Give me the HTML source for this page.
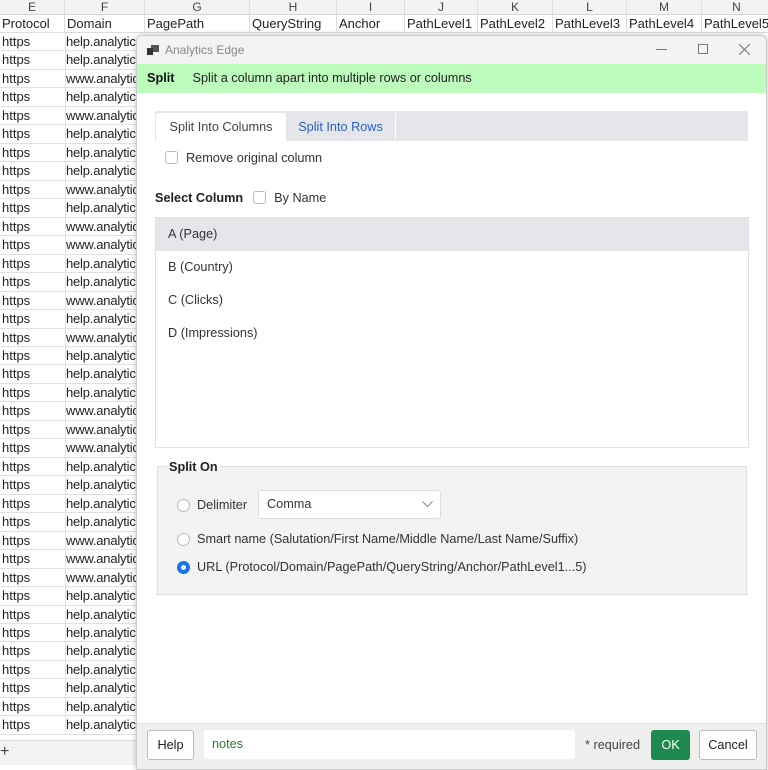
<!DOCTYPE html>
<html><head><meta charset="utf-8"><style>
*{box-sizing:border-box;margin:0;padding:0}
body{width:768px;height:765px;overflow:hidden;background:#fff;font-family:"Liberation Sans","DejaVu Sans",sans-serif;position:relative}
.hdr{position:absolute;top:0;left:0;width:768px;height:15px;background:#f3f3f3;border-bottom:1px solid #d4d4d4;font-size:12px;color:#444}
.hdr span{position:absolute;top:0;text-align:center;border-right:1px solid #ddd;height:15px;line-height:15px}
.names{position:absolute;top:15px;left:0;width:768px;height:18px;font-size:13px;color:#222}
.names span{position:absolute;top:0;height:18px;line-height:18px;padding-left:2px;border-right:1px solid #ddd;border-bottom:1px solid #ddd}
.rows{position:absolute;top:33px;left:0;width:140px}
.r{height:18.47px;border-bottom:1px solid #e1e1e1;font-size:13px;color:#222;position:relative;line-height:18px}
.r span{position:absolute;left:2px}
.r b{font-weight:normal;position:absolute;left:66px;white-space:nowrap;letter-spacing:-0.2px}
.r:before{content:"";position:absolute;left:65px;top:0;height:100%;border-left:1px solid #e1e1e1}
.bot{position:absolute;top:740px;left:0;width:140px;height:25px;background:#f3f3f3;border-top:1px solid #ddd;font-size:16px;color:#444;padding:2px 0 0 0}
.dlg{position:absolute;left:136px;top:35px;width:631px;height:735px;background:#fff;border:1px solid #ccc;border-radius:6px 6px 0 0;box-shadow:0 0 6px rgba(0,0,0,.25);overflow:hidden;font-size:12.7px;color:#333}
.title{height:28px;background:#f3f3f3;position:relative;font-size:12px;color:#888}
.ban{position:absolute;top:28px;left:0;width:100%;height:29px;background:#bdfbbc;line-height:29px;padding-left:10px;color:#222}
.a{position:absolute}
.cb{display:inline-block;width:13px;height:13px;border:1px solid #bbb;border-radius:3px;vertical-align:-2px;background:#fff}
.rad{position:absolute;width:13px;height:13px;border:1px solid #bbb;border-radius:50%;background:#fff}
</style></head><body>
<div class="hdr">
<span style="left:0;width:65px">E</span><span style="left:65px;width:80px">F</span><span style="left:145px;width:105px">G</span><span style="left:250px;width:87px">H</span><span style="left:337px;width:68px">I</span><span style="left:405px;width:73px">J</span><span style="left:478px;width:75px">K</span><span style="left:553px;width:74px">L</span><span style="left:627px;width:75px">M</span><span style="left:702px;width:70px">N</span>
</div>
<div class="names">
<span style="left:0;width:65px">Protocol</span><span style="left:65px;width:80px">Domain</span><span style="left:145px;width:105px">PagePath</span><span style="left:250px;width:87px">QueryString</span><span style="left:337px;width:68px">Anchor</span><span style="left:405px;width:73px">PathLevel1</span><span style="left:478px;width:75px">PathLevel2</span><span style="left:553px;width:74px">PathLevel3</span><span style="left:627px;width:75px">PathLevel4</span><span style="left:702px;width:70px;overflow:hidden;white-space:nowrap">PathLevel5</span>
</div>
<div class="rows">
<div class="r"><span>https</span><b>help.analytics</b></div>
<div class="r"><span>https</span><b>help.analytics</b></div>
<div class="r"><span>https</span><b>www.analytics</b></div>
<div class="r"><span>https</span><b>help.analytics</b></div>
<div class="r"><span>https</span><b>www.analytics</b></div>
<div class="r"><span>https</span><b>help.analytics</b></div>
<div class="r"><span>https</span><b>help.analytics</b></div>
<div class="r"><span>https</span><b>help.analytics</b></div>
<div class="r"><span>https</span><b>www.analytics</b></div>
<div class="r"><span>https</span><b>help.analytics</b></div>
<div class="r"><span>https</span><b>www.analytics</b></div>
<div class="r"><span>https</span><b>www.analytics</b></div>
<div class="r"><span>https</span><b>help.analytics</b></div>
<div class="r"><span>https</span><b>help.analytics</b></div>
<div class="r"><span>https</span><b>www.analytics</b></div>
<div class="r"><span>https</span><b>help.analytics</b></div>
<div class="r"><span>https</span><b>www.analytics</b></div>
<div class="r"><span>https</span><b>help.analytics</b></div>
<div class="r"><span>https</span><b>help.analytics</b></div>
<div class="r"><span>https</span><b>help.analytics</b></div>
<div class="r"><span>https</span><b>www.analytics</b></div>
<div class="r"><span>https</span><b>www.analytics</b></div>
<div class="r"><span>https</span><b>www.analytics</b></div>
<div class="r"><span>https</span><b>help.analytics</b></div>
<div class="r"><span>https</span><b>help.analytics</b></div>
<div class="r"><span>https</span><b>help.analytics</b></div>
<div class="r"><span>https</span><b>help.analytics</b></div>
<div class="r"><span>https</span><b>www.analytics</b></div>
<div class="r"><span>https</span><b>www.analytics</b></div>
<div class="r"><span>https</span><b>www.analytics</b></div>
<div class="r"><span>https</span><b>help.analytics</b></div>
<div class="r"><span>https</span><b>help.analytics</b></div>
<div class="r"><span>https</span><b>help.analytics</b></div>
<div class="r"><span>https</span><b>help.analytics</b></div>
<div class="r"><span>https</span><b>help.analytics</b></div>
<div class="r"><span>https</span><b>help.analytics</b></div>
<div class="r"><span>https</span><b>help.analytics</b></div>
<div class="r"><span>https</span><b>help.analytics</b></div>
</div>
<div class="bot">+</div>

<div class="dlg">
 <div class="title">
  <svg class="a" style="left:10px;top:9px" width="12" height="10"><rect x="4" y="0" width="8" height="7" fill="#555"/><rect x="0" y="3" width="6" height="7" fill="#333"/></svg>
  <span class="a" style="left:28px;top:7px">Analytics Edge</span>
  <span class="a" style="left:519px;top:13px;width:11px;height:1px;background:#777"></span>
  <span class="a" style="left:561px;top:8px;width:10px;height:10px;border:1px solid #777"></span>
  <svg class="a" style="left:602px;top:8px" width="11" height="11"><path d="M0 0L11 11M11 0L0 11" stroke="#777" stroke-width="1.1"/></svg>
 </div>
 <div class="ban"><b style="color:#111">Split</b><span style="margin-left:18px">Split a column apart into multiple rows or columns</span></div>

 <div class="a" style="left:18px;top:75px;width:593px;height:30px;background:#e4e6e9"></div>
 <div class="a" style="left:19px;top:77px;width:130px;height:28px;background:#fff;line-height:28px;text-align:center;color:#444;border-radius:3px 3px 0 0">Split Into Columns</div>
 <div class="a" style="left:149px;top:77px;width:110px;height:28px;line-height:28px;text-align:center;color:#2a5fc7;border-right:1px solid #fff">Split Into Rows</div>

 <div class="a" style="left:28px;top:115px"><span class="cb"></span><span style="margin-left:8px">Remove original column</span></div>
 <div class="a" style="left:18px;top:155px"><b style="color:#222">Select Column</b><span class="cb" style="margin-left:10px"></span><span style="margin-left:8px">By Name</span></div>

 <div class="a" style="left:18px;top:181px;width:594px;height:231px;border:1px solid #e3e3e3">
  <div style="height:33px;background:#e4e6e9;line-height:33px;padding-left:12px">A (Page)</div>
  <div style="height:33px;line-height:33px;padding-left:12px">B (Country)</div>
  <div style="height:33px;line-height:33px;padding-left:12px">C (Clicks)</div>
  <div style="height:33px;line-height:33px;padding-left:12px">D (Impressions)</div>
 </div>

 <div class="a" style="left:20px;top:430px;width:590px;height:129px;background:#f3f3f3;border:1px solid #e0e0e0"></div>
 <b class="a" style="left:30px;top:424px;color:#222;padding:0 2px;background:linear-gradient(#fff 50%,#f3f3f3 50%)">Split On</b>
 <span class="rad" style="left:40px;top:463px"></span>
 <span class="a" style="left:60px;top:462px">Delimiter</span>
 <div class="a" style="left:121px;top:454px;width:183px;height:29px;background:#fff;border:1px solid #ddd;border-radius:3px;line-height:27px;padding-left:8px">Comma
  <svg class="a" style="left:163px;top:10px" width="11" height="7"><path d="M0.5 0.5L5.5 5.5L10.5 0.5" fill="none" stroke="#888"/></svg></div>
 <span class="rad" style="left:40px;top:497px"></span>
 <span class="a" style="left:60px;top:496px">Smart name (Salutation/First Name/Middle Name/Last Name/Suffix)</span>
 <span class="rad" style="left:40px;top:525px;border:4px solid #1a73e8"></span>
 <span class="a" style="left:60px;top:524px">URL (Protocol/Domain/PagePath/QueryString/Anchor/PathLevel1...5)</span>

 <div class="a" style="left:0;top:687px;width:631px;height:50px;background:#efefef;border-top:1px solid #ddd"></div>
 <div class="a" style="left:10px;top:694px;width:47px;height:30px;background:#fff;border:1px solid #bbb;border-radius:3px;line-height:28px;text-align:center;color:#222">Help</div>
 <div class="a" style="left:67px;top:694px;width:371px;height:29px;background:#fff;border-radius:3px;line-height:29px;padding-left:8px;color:#2f7a2f">notes</div>
 <span class="a" style="left:448px;top:702px;color:#444">* required</span>
 <div class="a" style="left:514px;top:694px;width:39px;height:30px;background:#1e8a50;border-radius:3px;line-height:30px;text-align:center;color:#fff">OK</div>
 <div class="a" style="left:562px;top:694px;width:58px;height:30px;background:#fff;border:1px solid #bbb;border-radius:3px;line-height:28px;text-align:center;color:#222">Cancel</div>
</div>
</body></html>
